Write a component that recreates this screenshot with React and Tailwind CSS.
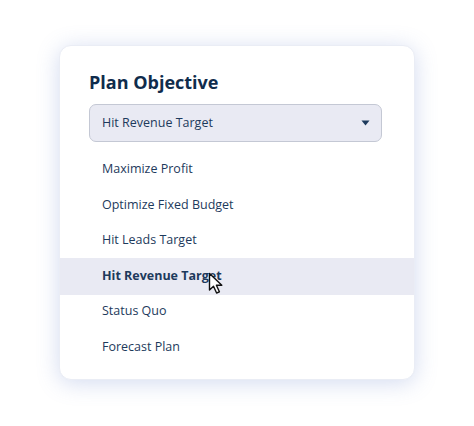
import React from "react";

const options = [
  "Maximize Profit",
  "Optimize Fixed Budget",
  "Hit Leads Target",
  "Hit Revenue Target",
  "Status Quo",
  "Forecast Plan",
];

const selected = "Hit Revenue Target";

const Pointer = () => (
  <svg
    className="absolute left-[148px] top-[14px]"
    width="16"
    height="24"
    viewBox="0 0 16 24"
  >
    <path
      d="M1.5 1.5 L1.5 18 L5.5 14.2 L8.6 21 L11.4 19.8 L8.4 13.2 L13.8 13.2 Z"
      fill="#fff"
      stroke="#111"
      strokeWidth="1.4"
      strokeLinejoin="round"
    />
  </svg>
);

export default function App() {
  return (
    <div
      className="w-[474px] h-[426px] bg-white pt-[45px] pl-[59px]"
      style={{ fontFamily: '"Open Sans", "Liberation Sans", sans-serif' }}
    >
      <div className="w-[356px] h-[335px] bg-white rounded-[12px] border border-[#eaedf5] shadow-[0_3px_22px_rgba(110,135,205,0.3)] pt-[23px] pb-[17px] text-[#1d3a5c]">
        <h2 className="px-[29px] text-[18px] font-bold leading-[26px] text-[#0f2c4c]">
          Plan Objective
        </h2>
        <div className="mx-[29px] mt-[9px] w-[293px] h-[38px] rounded-[7px] border border-[#c4c8d4] bg-[#e9eaf3] flex items-center justify-between pl-[12px] pr-[11px]">
          <span className="text-[12.5px] font-medium">{selected}</span>
          <svg width="9" height="6" viewBox="0 0 9 6">
            <path d="M0.5 0.5 L8.5 0.5 L4.5 5.5 Z" fill="#1d3a5c" />
          </svg>
        </div>
        <ul className="mt-[10px]">
          {options.map((o) => (
            <li
              key={o}
              className={
                o === selected
                  ? "relative h-[37px] -my-[0.75px] flex items-center pl-[42px] bg-[#e9eaf3] text-[12.5px] font-bold"
                  : "relative h-[35.5px] flex items-center pl-[42px] text-[12.5px] font-medium"
              }
            >
              {o}
              {o === selected && <Pointer />}
            </li>
          ))}
        </ul>
      </div>
    </div>
  );
}
